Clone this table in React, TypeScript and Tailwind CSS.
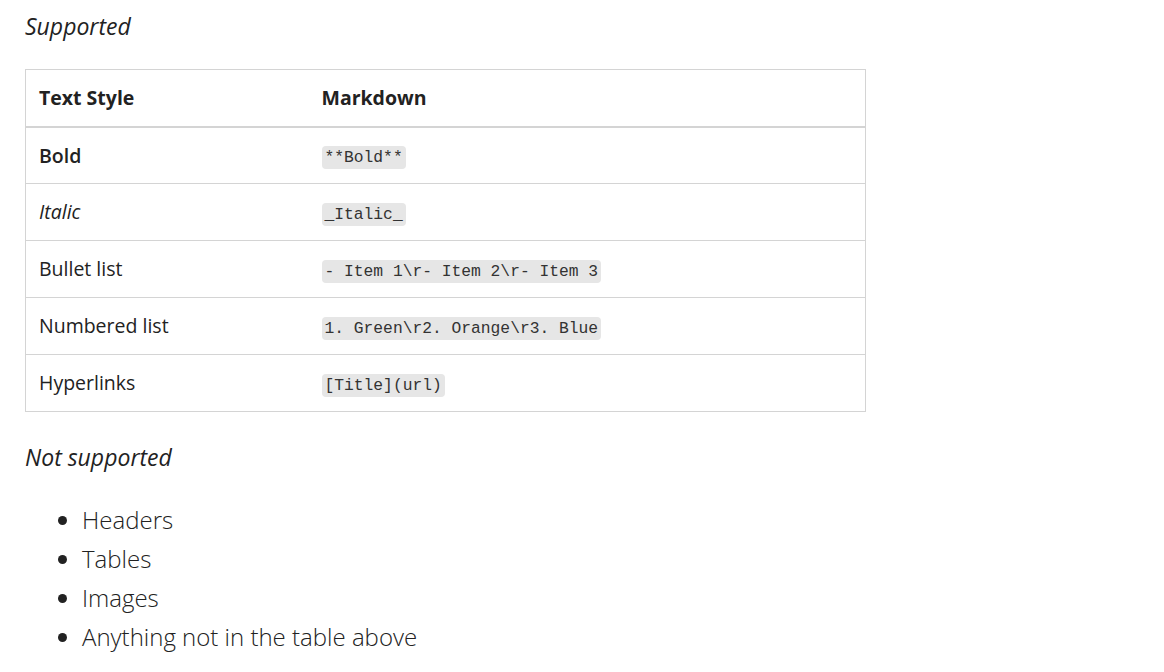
const ROWS = [
  { style: "Bold", md: "**Bold**", cls: "font-semibold" },
  { style: "Italic", md: "_Italic_", cls: "italic" },
  { style: "Bullet list", md: "- Item 1\\r- Item 2\\r- Item 3", cls: "" },
  { style: "Numbered list", md: "1. Green\\r2. Orange\\r3. Blue", cls: "" },
  { style: "Hyperlinks", md: "[Title](url)", cls: "" },
];

const NOT_SUPPORTED = ["Headers", "Tables", "Images", "Anything not in the table above"];

function Code({ children }: { children: string }) {
  return (
    <code className="rounded-[4px] bg-[#e6e6e6] px-[3px] py-[2px] font-['Liberation_Mono',monospace] text-[16.3px] text-[#333]">
      {children}
    </code>
  );
}

export default function App() {
  return (
    <div className="min-h-screen bg-white px-[25px] pt-[10px] font-['Open_Sans',sans-serif] text-[#222]">
      <p className="text-[23px] italic leading-[32px]">Supported</p>

      <table className="mt-[27px] w-[841px] border-collapse border border-[#d4d4d4] text-[19.5px]">
        <thead>
          <tr className="h-[57px] border-b-2 border-[#d4d4d4]">
            <th className="w-[283px] px-[13px] text-left font-bold">Text Style</th>
            <th className="px-[13px] text-left font-bold">Markdown</th>
          </tr>
        </thead>
        <tbody>
          {ROWS.map((row) => (
            <tr key={row.style} className="h-[57px] border-b border-[#d4d4d4] last:border-b-0">
              <td className={`px-[13px] ${row.cls}`}>{row.style}</td>
              <td className="px-[13px]">
                <Code>{row.md}</Code>
              </td>
            </tr>
          ))}
        </tbody>
      </table>

      <p className="mt-[29px] text-[23px] italic leading-[32px]">Not supported</p>

      <ul className="mt-[31px] flex flex-col gap-[7px] pl-[57px] text-[24px] font-light leading-[32px]">
        {NOT_SUPPORTED.map((item) => (
          <li key={item} className="list-disc">
            {item}
          </li>
        ))}
      </ul>
    </div>
  );
}
